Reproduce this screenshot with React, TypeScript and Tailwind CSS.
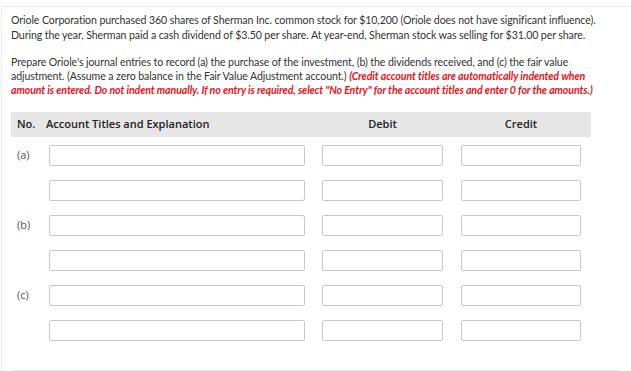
import React from 'react';

const rows = [
  { label: '(a)' },
  { label: '' },
  { label: '(b)' },
  { label: '' },
  { label: '(c)' },
  { label: '' },
];

const Box = ({ w }: { w: string }) => (
  <div className={`${w} h-[21px] border border-[#c9c9c9] rounded-[2px] bg-white shrink-0`} />
);

export default function App() {
  return (
    <div className="w-[631px] h-[371px] overflow-hidden bg-white pt-[6px] pl-[1px]">
      <div className="h-full border-t border-l border-[#ebebeb] pl-[9px] pt-[6px] text-[#333] font-['Lato',sans-serif]">
        <p className="text-[10.6px] leading-[15px] tracking-[-0.1px]">
          Oriole Corporation purchased 360 shares of Sherman Inc. common stock for $10,200 (Oriole does not have significant influence).
          <br />
          During the year, Sherman paid a cash dividend of $3.50 per share. At year-end, Sherman stock was selling for $31.00 per share.
        </p>
        <div className="mt-[12px] text-[10.6px] leading-[14px] tracking-[-0.1px]">
          <div>Prepare Oriole's journal entries to record (a) the purchase of the investment, (b) the dividends received, and (c) the fair value</div>
          <div>
            adjustment. (Assume a zero balance in the Fair Value Adjustment account.){' '}
            <span className="text-[#e8121b] font-bold italic">(Credit account titles are automatically indented when</span>
          </div>
          <div className="text-[#e8121b] font-bold italic">
            amount is entered. Do not indent manually. If no entry is required, select "No Entry" for the account titles and enter 0 for the amounts.)
          </div>
        </div>

        <div className="mt-[15px] w-[580px]">
          <div className="h-[25px] bg-[#e6e6e6] flex items-center text-[11px] font-semibold text-[#222] font-['Open_Sans',sans-serif]">
            <div className="w-[35px] pl-[6px]">No.</div>
            <div className="w-[276px]">Account Titles and Explanation</div>
            <div className="w-[121px] text-center">Debit</div>
            <div className="w-[18px]" />
            <div className="w-[120px] text-center">Credit</div>
          </div>
          <div className="pt-[8px] flex flex-col gap-[14px]">
            {rows.map((r, i) => (
              <div key={i} className="flex items-center">
                <div className="w-[38px] pl-[6px] text-[11px] text-[#555] font-['Open_Sans',sans-serif]">{r.label}</div>
                <Box w="w-[256px]" />
                <div className="w-[17px]" />
                <Box w="w-[121px]" />
                <div className="w-[18px]" />
                <Box w="w-[120px]" />
              </div>
            ))}
          </div>
        </div>

        <div className="mt-[29px] w-[610px] h-[20px] border border-[#e2e2e2] rounded-[3px] bg-[#fafafa]" />
      </div>
    </div>
  );
}
